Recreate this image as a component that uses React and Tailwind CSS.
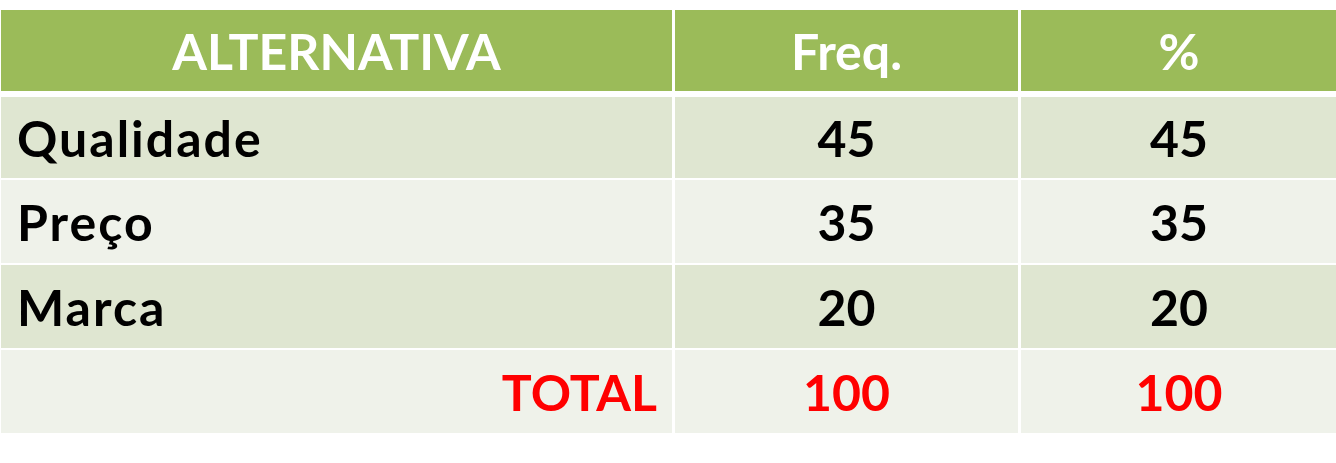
import React from 'react';

const rows = [
  { label: 'Qualidade', freq: '45', pct: '45', h: 'h-[81px]', bg: 'bg-[#dfe6d1]' },
  { label: 'Preço', freq: '35', pct: '35', h: 'h-[83px]', bg: 'bg-[#eff2ea]' },
  { label: 'Marca', freq: '20', pct: '20', h: 'h-[83px]', bg: 'bg-[#dfe6d1]' },
];

const App = () => {
  return (
    <div className="w-[1336px] h-[463px] bg-white pt-[10px] pl-px font-['Lato',sans-serif] font-bold text-[50px] leading-none">
      <div className="grid grid-cols-[671px_343px_316px] gap-x-[3px]">
        <div className="h-[81px] bg-[#9bbb59] text-white flex items-center justify-center">ALTERNATIVA</div>
        <div className="h-[81px] bg-[#9bbb59] text-white flex items-center justify-center">Freq.</div>
        <div className="h-[81px] bg-[#9bbb59] text-white flex items-center justify-center">%</div>
      </div>
      <div className="h-[6px]" />
      <div className="flex flex-col gap-y-[2px]">
        {rows.map((row) => (
          <div key={row.label} className="grid grid-cols-[671px_343px_316px] gap-x-[3px] text-black">
            <div className={`${row.h} ${row.bg} flex items-center pl-[16px] tracking-[2px]`}>{row.label}</div>
            <div className={`${row.h} ${row.bg} flex items-center justify-center`}>{row.freq}</div>
            <div className={`${row.h} ${row.bg} flex items-center justify-center`}>{row.pct}</div>
          </div>
        ))}
        <div className="grid grid-cols-[671px_343px_316px] gap-x-[3px] text-[#ff0000]">
          <div className="h-[83px] bg-[#eff2ea] flex items-center justify-end pr-[15px]">TOTAL</div>
          <div className="h-[83px] bg-[#eff2ea] flex items-center justify-center">100</div>
          <div className="h-[83px] bg-[#eff2ea] flex items-center justify-center">100</div>
        </div>
      </div>
    </div>
  );
};

export default App;
